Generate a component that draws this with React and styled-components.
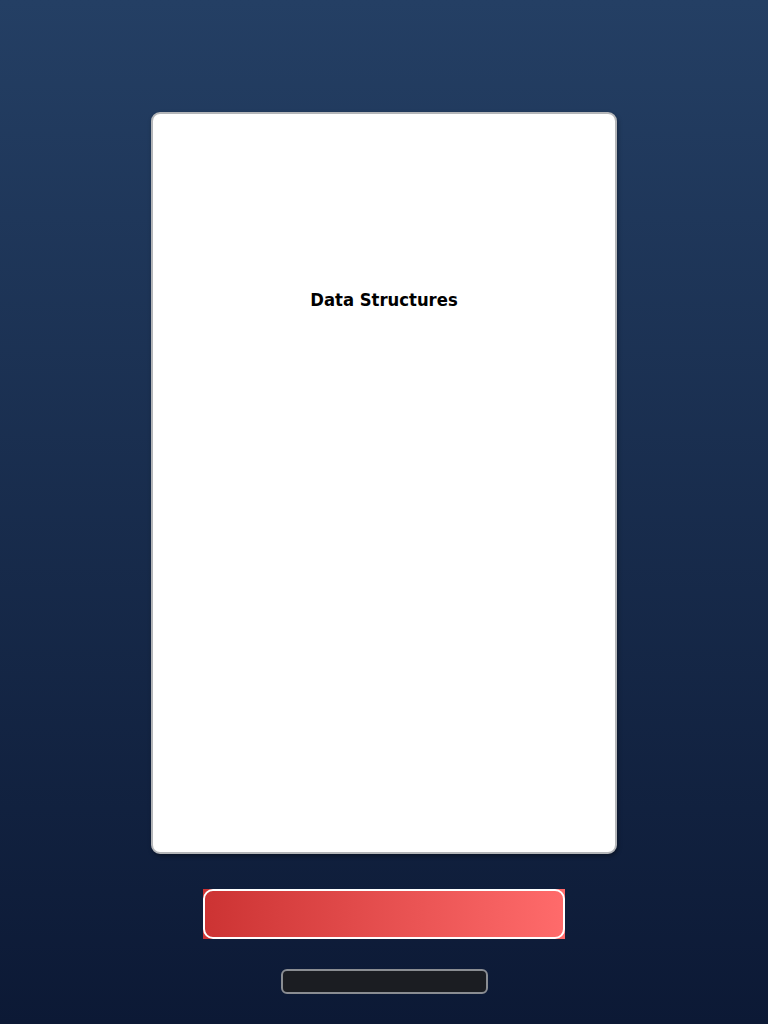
import React from "react";
import styled, { createGlobalStyle } from "styled-components";

const Global = createGlobalStyle`
  html, body { margin: 0; padding: 0; }
  body {
    background: linear-gradient(to bottom, #243f64 0%, #0c1935 100%);
    min-height: 1024px;
    font-family: "DejaVu Sans", sans-serif;
  }
`;

const Page = styled.div`
  width: 768px;
  height: 1024px;
  display: flex;
  flex-direction: column;
  align-items: center;
  padding-top: 112px;
  box-sizing: border-box;
`;

const Card = styled.div`
  width: 466px;
  height: 742px;
  box-sizing: border-box;
  background: #ffffff;
  border: 2px solid #b4b6b9;
  border-radius: 9px;
  box-shadow: 1px 2px 4px rgba(0, 0, 0, 0.35);
  display: flex;
  flex-direction: column;
  align-items: center;
  padding-top: 175px;
`;

const Title = styled.h1`
  margin: 0;
  font-family: "DejaVu Sans Condensed", "DejaVu Sans", sans-serif;
  font-weight: bold;
  font-size: 18.3px;
  color: #000;
  letter-spacing: 0px;
`;

const RedButton = styled.div`
  position: relative;
  margin-top: 35px;
  width: 362px;
  height: 50px;
  background: linear-gradient(to right, #cc3333, #ff6b6b);
  &::after {
    content: "";
    position: absolute;
    inset: 0;
    border: 2px solid #ffffff;
    border-radius: 10px;
  }
`;

const DarkBar = styled.div`
  margin-top: 30px;
  width: 207px;
  height: 25px;
  box-sizing: border-box;
  background: #1b1d22;
  border: 2px solid #8a8d92;
  border-radius: 6px;
`;

export default function App() {
  return (
    <>
      <Global />
      <Page>
        <Card>
          <Title>Data Structures</Title>
        </Card>
        <RedButton />
        <DarkBar />
      </Page>
    </>
  );
}
